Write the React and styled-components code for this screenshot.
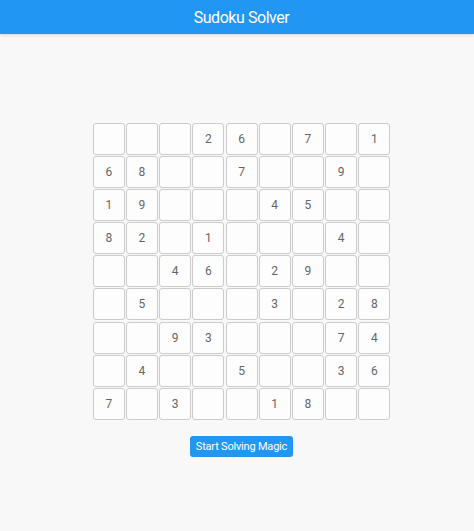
import React from "react";
import styled, { createGlobalStyle } from "styled-components";

const GlobalStyle = createGlobalStyle`
  body {
    margin: 0;
    background: #f8f8f9;
    font-family: Roboto, "Liberation Sans", sans-serif;
  }
`;

const Page = styled.div`
  display: flex;
  flex-direction: column;
  align-items: center;
  min-height: 531px;
`;

const Header = styled.header`
  box-sizing: border-box;
  width: 100%;
  height: 34px;
  padding-left: 9px;
  background: #2196f3;
  color: #fff;
  display: flex;
  align-items: center;
  justify-content: center;
  font-size: 16px;
  letter-spacing: -0.45px;
  box-shadow: 0 1px 3px rgba(0, 0, 0, 0.15);
`;

const Main = styled.main`
  box-sizing: border-box;
  width: 100%;
  padding-left: 9px;
  display: flex;
  flex-direction: column;
  align-items: center;
`;

const Board = styled.div`
  display: grid;
  grid-template-columns: repeat(9, 32px);
  grid-auto-rows: 32px;
  gap: 1.1px 1.2px;
  margin-top: 89px;
`;

const Cell = styled.div`
  box-sizing: border-box;
  border: 1.5px solid #cbcbcb;
  border-radius: 3px;
  background: #fdfdfd;
  display: flex;
  align-items: center;
  justify-content: center;
  font-size: 12px;
  color: #666;
`;

const SolveButton = styled.button`
  margin-top: 16px;
  height: 21px;
  padding: 0 6px;
  border: none;
  border-radius: 3px;
  background: #2196f3;
  color: #fff;
  font-family: Roboto, "Liberation Sans", sans-serif;
  font-size: 11px;
  letter-spacing: -0.2px;
  cursor: pointer;
`;

const puzzle = [
  "___26_7_1",
  "68__7__9_",
  "19___45__",
  "82_1___4_",
  "__46_29__",
  "_5___3_28",
  "__93___74",
  "_4__5__36",
  "7_3__18__",
];

export default function App() {
  return (
    <Page>
      <GlobalStyle />
      <Header>Sudoku Solver</Header>
      <Main>
        <Board>
          {puzzle.map((row, r) =>
            row.split("").map((ch, c) => (
              <Cell key={`${r}-${c}`}>{ch === "_" ? "" : ch}</Cell>
            ))
          )}
        </Board>
        <SolveButton>Start Solving Magic</SolveButton>
      </Main>
    </Page>
  );
}
